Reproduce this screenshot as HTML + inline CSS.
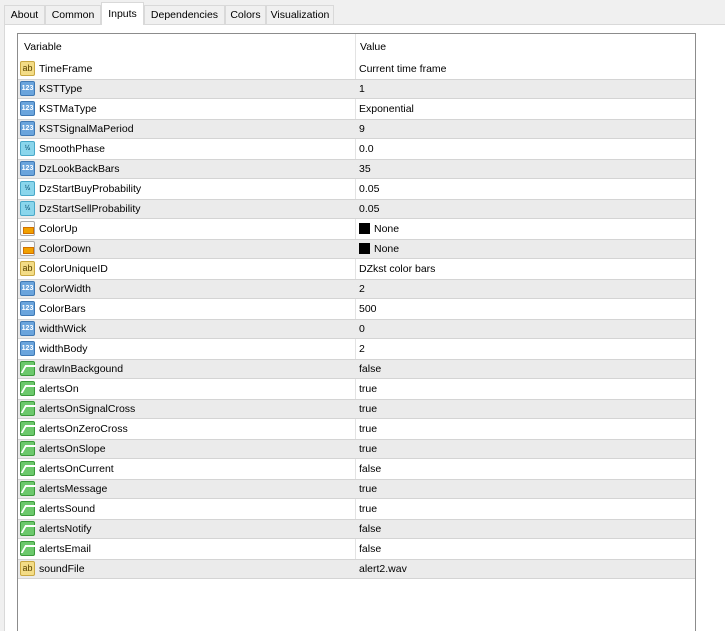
<!DOCTYPE html>
<html><head><style>
*{margin:0;padding:0;box-sizing:border-box}
html,body{width:725px;height:631px;overflow:hidden}
body{background:#f0f0f0;font-family:"Liberation Sans",sans-serif;font-size:10.5px;color:#000;position:relative}
.tab{position:absolute;top:5px;height:19px;border:1px solid #d9d9d9;border-bottom:none;background:#f0f0f0;padding:3px 0 0 0;text-align:center}
.tab.sel{top:2px;height:23px;background:#fff;border-color:#d9d9d9;z-index:2}
.panel{position:absolute;left:4px;top:24px;width:725px;height:620px;background:#fff;border:1px solid #d9d9d9}
.table{position:absolute;left:17px;top:33px;width:679px;height:620px;border:1px solid #8c8c8c;background:#fff}
.hdr{position:absolute;top:0;height:25px;left:0;width:100%}
.hdr span{position:absolute;top:7px}
.vdiv{position:absolute;left:337px;top:0;width:1px;height:545px;background:#e3e3e3}
.row{position:absolute;left:0;width:677px;height:20px}
.row.g{background:#ebebeb;border-top:1px solid #d4d4d4;border-bottom:1px solid #d4d4d4}
.row .n{position:absolute;left:21px;top:4px}
.row.g .n{top:3px}
.row .v{position:absolute;left:341px;top:4px}
.row.g .v{top:3px}
.ic{position:absolute;left:2px;top:2px;width:15px;height:15px;border-radius:2px;font-size:7px;font-weight:bold;line-height:13px;text-align:center}
.row.g .ic{top:1px}
.ab{background:#f3dc86;border:1px solid #c9a842;color:#5a4300;font-size:9px;font-weight:normal}
.i123{background:#6aa4dc;border:1px solid #3e78b4;color:#fff}
.half{background:#8ad6ec;border:1px solid #4aa8c8;color:#1b6080}
.col{background:#fafafa;border:1px solid #aaa}
.col:after{content:"";position:absolute;left:2px;top:5px;width:9px;height:5px;background:#f0a000;border:1px solid #d07000}
.bool{background:#6cc86c;border:1px solid #3a9a3a}
.bool:after{content:"";position:absolute;left:2px;top:3px;width:9px;height:6px;border-left:2px solid #fff;border-top:2px solid #fff;transform:skewX(-30deg)}
.sw{display:inline-block;width:11px;height:11px;background:#000;vertical-align:-2px;margin-right:4px}
</style></head><body>
<div class="panel"></div>
<div class="tab" style="left:4px;width:41px">About</div>
<div class="tab" style="left:45px;width:56px">Common</div>
<div class="tab sel" style="left:101px;width:43px;padding-top:5px">Inputs</div>
<div class="tab" style="left:144px;width:81px">Dependencies</div>
<div class="tab" style="left:225px;width:41px">Colors</div>
<div class="tab" style="left:266px;width:68px">Visualization</div>
<div class="table">
<div class="vdiv"></div>
<div class="hdr"><span style="left:6px">Variable</span><span style="left:342px">Value</span></div>
<div class="row" style="top:25px"><div class="ic ab">ab</div><span class="n">TimeFrame</span><span class="v">Current time frame</span></div>
<div class="row g" style="top:45px"><div class="ic i123">123</div><span class="n">KSTType</span><span class="v">1</span></div>
<div class="row" style="top:65px"><div class="ic i123">123</div><span class="n">KSTMaType</span><span class="v">Exponential</span></div>
<div class="row g" style="top:85px"><div class="ic i123">123</div><span class="n">KSTSignalMaPeriod</span><span class="v">9</span></div>
<div class="row" style="top:105px"><div class="ic half">½</div><span class="n">SmoothPhase</span><span class="v">0.0</span></div>
<div class="row g" style="top:125px"><div class="ic i123">123</div><span class="n">DzLookBackBars</span><span class="v">35</span></div>
<div class="row" style="top:145px"><div class="ic half">½</div><span class="n">DzStartBuyProbability</span><span class="v">0.05</span></div>
<div class="row g" style="top:165px"><div class="ic half">½</div><span class="n">DzStartSellProbability</span><span class="v">0.05</span></div>
<div class="row" style="top:185px"><div class="ic col"></div><span class="n">ColorUp</span><span class="v"><i class="sw"></i>None</span></div>
<div class="row g" style="top:205px"><div class="ic col"></div><span class="n">ColorDown</span><span class="v"><i class="sw"></i>None</span></div>
<div class="row" style="top:225px"><div class="ic ab">ab</div><span class="n">ColorUniqueID</span><span class="v">DZkst color bars</span></div>
<div class="row g" style="top:245px"><div class="ic i123">123</div><span class="n">ColorWidth</span><span class="v">2</span></div>
<div class="row" style="top:265px"><div class="ic i123">123</div><span class="n">ColorBars</span><span class="v">500</span></div>
<div class="row g" style="top:285px"><div class="ic i123">123</div><span class="n">widthWick</span><span class="v">0</span></div>
<div class="row" style="top:305px"><div class="ic i123">123</div><span class="n">widthBody</span><span class="v">2</span></div>
<div class="row g" style="top:325px"><div class="ic bool"></div><span class="n">drawInBackgound</span><span class="v">false</span></div>
<div class="row" style="top:345px"><div class="ic bool"></div><span class="n">alertsOn</span><span class="v">true</span></div>
<div class="row g" style="top:365px"><div class="ic bool"></div><span class="n">alertsOnSignalCross</span><span class="v">true</span></div>
<div class="row" style="top:385px"><div class="ic bool"></div><span class="n">alertsOnZeroCross</span><span class="v">true</span></div>
<div class="row g" style="top:405px"><div class="ic bool"></div><span class="n">alertsOnSlope</span><span class="v">true</span></div>
<div class="row" style="top:425px"><div class="ic bool"></div><span class="n">alertsOnCurrent</span><span class="v">false</span></div>
<div class="row g" style="top:445px"><div class="ic bool"></div><span class="n">alertsMessage</span><span class="v">true</span></div>
<div class="row" style="top:465px"><div class="ic bool"></div><span class="n">alertsSound</span><span class="v">true</span></div>
<div class="row g" style="top:485px"><div class="ic bool"></div><span class="n">alertsNotify</span><span class="v">false</span></div>
<div class="row" style="top:505px"><div class="ic bool"></div><span class="n">alertsEmail</span><span class="v">false</span></div>
<div class="row g" style="top:525px"><div class="ic ab">ab</div><span class="n">soundFile</span><span class="v">alert2.wav</span></div>
</div>
</body></html>
